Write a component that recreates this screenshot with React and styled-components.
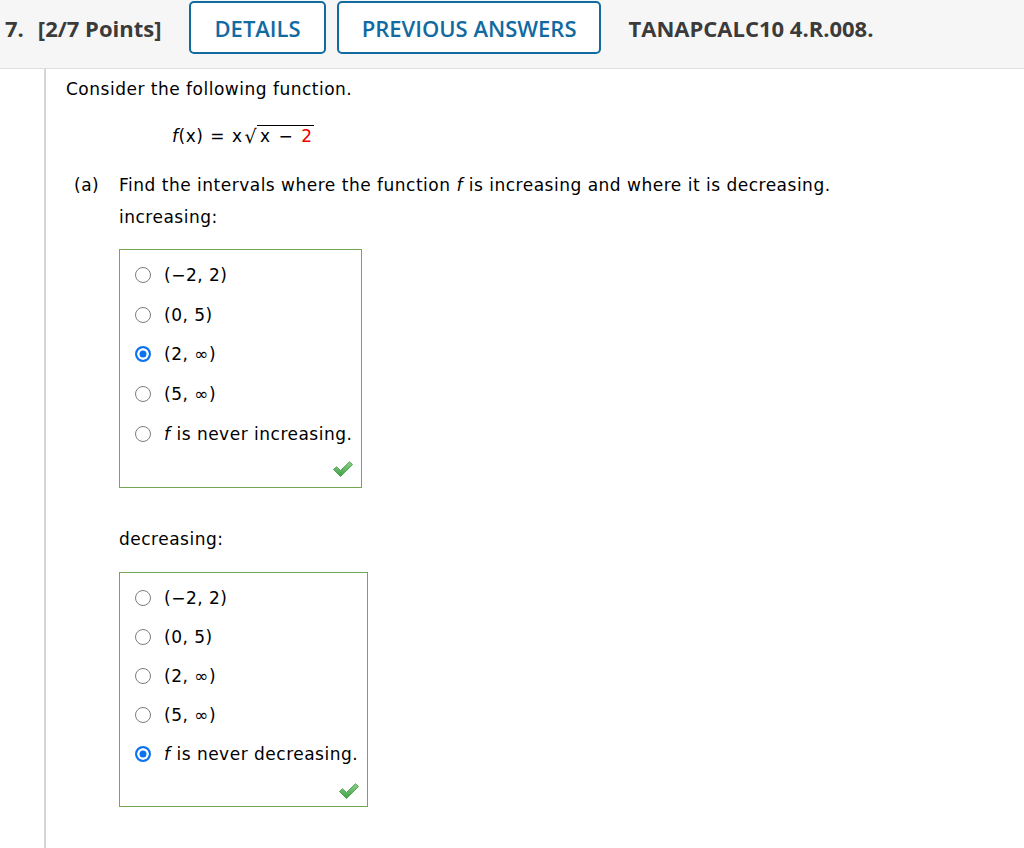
import React from "react";
import styled, { createGlobalStyle } from "styled-components";

const GlobalStyle = createGlobalStyle`
  html, body {
    margin: 0;
    padding: 0;
    background: #ffffff;
  }
  body {
    font-family: "DejaVu Sans", Verdana, sans-serif;
    color: #000000;
  }
`;

const intervals = ["(\u22122, 2)", "(0, 5)", "(2, \u221e)", "(5, \u221e)"];

const App = () => {
  return (
    <Page>
      <GlobalStyle />
      <Header>
        <Number>7.</Number>
        <Points>[2/7 Points]</Points>
        <HeaderButton type="button">DETAILS</HeaderButton>
        <HeaderButton type="button">PREVIOUS ANSWERS</HeaderButton>
        <Code>TANAPCALC10 4.R.008.</Code>
      </Header>
      <Body>
        <Intro>Consider the following function.</Intro>
        <Formula>
          <i>f</i>(x) = x
          <Radical>{"\u221a"}</Radical>
          <Radicand>
            x {"\u2212"} <Red>2</Red>
          </Radicand>
        </Formula>
        <Part>
          <PartLabel>(a)</PartLabel>
          <span>
            Find the intervals where the function <i>f</i> is increasing and
            where it is decreasing.
          </span>
        </Part>
        <Prompt>increasing:</Prompt>
        <ChoiceBox $top={22} $pt={5} $pb={8}>
          {intervals.map((c, i) => (
            <Choice key={c} $h={39.75}>
              <Radio $checked={i === 2} />
              {c}
            </Choice>
          ))}
          <Choice $h={39.75}>
            <Radio />
            <span>
              <i>f</i> is never increasing.
            </span>
          </Choice>
          <CheckRow $gap={5}>
            <CheckMark />
          </CheckRow>
        </ChoiceBox>
        <Prompt $top={41}>decreasing:</Prompt>
        <ChoiceBox $top={23} $pt={6} $pb={5}>
          {intervals.map((c) => (
            <Choice key={c} $h={39}>
              <Radio />
              {c}
            </Choice>
          ))}
          <Choice $h={39}>
            <Radio $checked />
            <span>
              <i>f</i> is never decreasing.
            </span>
          </Choice>
          <CheckRow $gap={7}>
            <CheckMark />
          </CheckRow>
        </ChoiceBox>
      </Body>
    </Page>
  );
};

const CheckMark = () => (
  <svg width="22" height="18" viewBox="0 0 22 18">
    <defs>
      <linearGradient id="chk" x1="0" y1="0" x2="0" y2="1">
        <stop offset="0" stopColor="#8fd08a" />
        <stop offset="1" stopColor="#3f9f45" />
      </linearGradient>
    </defs>
    <path
      d="M1.5 9.5 L4.5 6.8 L8.5 10.5 L17.5 1.8 L20.5 4.6 L8.5 16.5 Z"
      fill="url(#chk)"
      stroke="#4fa650"
      strokeWidth="1"
      strokeLinejoin="round"
    />
  </svg>
);

const Page = styled.div`
  min-height: 848px;
  display: flex;
  flex-direction: column;
`;

const Header = styled.div`
  display: flex;
  align-items: center;
  height: 53px;
  padding: 1px 0 14px 5px;
  background: #f6f6f6;
  border-bottom: 1px solid #e0e0e0;
  font-family: "Open Sans", sans-serif;
  font-weight: 700;
  font-size: 22px;
  color: #3b3b3b;
`;

const Number = styled.span`
  margin-right: 14px;
`;

const Points = styled.span`
  margin-right: 28px;
`;

const HeaderButton = styled.button`
  height: 53px;
  box-sizing: border-box;
  padding: 0 23px;
  margin-right: 11px;
  background: #ffffff;
  border: 2px solid #116aa0;
  border-radius: 5px;
  color: #116aa0;
  font-family: "Open Sans", sans-serif;
  font-weight: 600;
  font-size: 22px;
  cursor: pointer;
`;

const Code = styled.span`
  margin-left: 16px;
`;

const Body = styled.div`
  flex: 1;
  display: flex;
  flex-direction: column;
  margin-left: 44px;
  border-left: 2px solid #d6d6d6;
  padding: 10px 0 0 20px;
  font-size: 17px;
  letter-spacing: 0.5px;
  line-height: 20px;
`;

const Intro = styled.div``;

const Formula = styled.div`
  margin: 26px 0 0 106px;
  display: flex;
  align-items: flex-end;
  white-space: pre;
  word-spacing: 1px;
`;

const Radical = styled.span`
  margin-left: 2px;
  font-size: 19px;
`;

const Radicand = styled.span`
  border-top: 1px solid #000000;
  padding: 1px 1px 0 3px;
  line-height: 19px;
  word-spacing: 2px;
`;

const Red = styled.span`
  color: #ee0000;
`;

const Part = styled.div`
  display: flex;
  margin: 29px 0 0 8px;
`;

const PartLabel = styled.span`
  width: 45px;
`;

const Prompt = styled.div`
  margin: ${(p) => p.$top || 12}px 0 0 53px;
`;

const ChoiceBox = styled.div`
  align-self: flex-start;
  margin: ${(p) => p.$top}px 0 0 53px;
  padding: ${(p) => p.$pt}px 9px ${(p) => p.$pb}px 15px;
  border: 1px solid #73a853;
  display: flex;
  flex-direction: column;
`;

const Choice = styled.div`
  display: flex;
  align-items: center;
  gap: 13px;
  height: ${(p) => p.$h}px;
  white-space: nowrap;
`;

const Radio = styled.span`
  width: 16px;
  height: 16px;
  box-sizing: border-box;
  border-radius: 50%;
  flex-shrink: 0;
  background: ${(p) => (p.$checked ? "#0b73f2" : "#ffffff")};
  border: ${(p) => (p.$checked ? "2px solid #0b73f2" : "1px solid #7d7d7d")};
  box-shadow: ${(p) => (p.$checked ? "inset 0 0 0 2.5px #ffffff" : "none")};
`;

const CheckRow = styled.div`
  display: flex;
  justify-content: flex-end;
  align-items: center;
  height: 20px;
  margin: ${(p) => p.$gap}px -2px 0 0;
`;

export default App;
